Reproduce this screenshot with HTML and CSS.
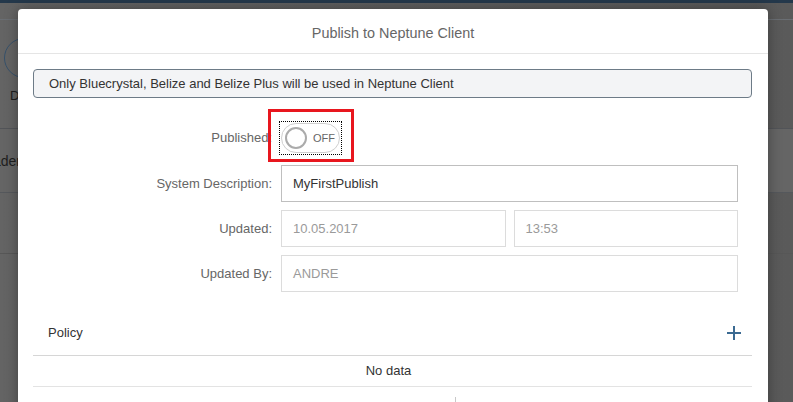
FILE: index.html
```html
<!DOCTYPE html>
<html lang="en">
<head>
    <meta charset="UTF-8">
    <meta name="viewport" content="width=device-width, initial-scale=1.0">
    <title>Publish to Neptune Client</title>
    <link rel="stylesheet" href="styles.css">
</head>
<body>

<!-- page behind the dialog, already dimmed -->
<div class="page">
    <div class="shell-bar"></div>
    <div class="page-row row-top"></div>
    <div class="page-row row-tile">
        <div class="avatar"></div>
        <div class="tile-label">Data</div>
    </div>
    <div class="page-row row-list"><span class="list-text">Header</span></div>
    <div class="page-row row-empty"></div>
    <div class="page-rest"></div>
</div>

<div class="dialog">
    <div class="dialog-header">Publish to Neptune Client</div>

    <div class="dialog-content">
        <div class="message-strip">Only Bluecrystal, Belize and Belize Plus will be used in Neptune Client</div>

        <div class="form">
            <label class="form-label">Published:</label>
            <div class="form-field">
                <div class="switch-focus">
                    <div class="switch">
                        <span class="switch-knob"></span>
                        <span class="switch-text">OFF</span>
                    </div>
                </div>
            </div>

            <label class="form-label">System Description:</label>
            <div class="form-field">
                <div class="input">MyFirstPublish</div>
            </div>

            <label class="form-label">Updated:</label>
            <div class="form-field field-pair">
                <div class="input disabled">10.05.2017</div>
                <div class="input disabled">13:53</div>
            </div>

            <label class="form-label">Updated By:</label>
            <div class="form-field">
                <div class="input disabled">ANDRE</div>
            </div>
        </div>

        <div class="toolbar">
            <span class="toolbar-title">Policy</span>
            <svg class="add-icon" width="14" height="14" viewBox="0 0 14 14">
                <path d="M7 0V14M0 7H14" stroke="#3b6a92" stroke-width="2"/>
            </svg>
        </div>
        <div class="table-row">No data</div>
        <div class="table-next"><span class="col-tick"></span></div>
    </div>

    <div class="highlight"></div>
</div>

</body>
</html>
```

FILE: styles.css
```css
body {
    margin: 0;
    padding: 0;
    font-family: "Liberation Sans", Arial, sans-serif;
    background-color: #5e5e5e;
    overflow: hidden;
}
.page {
    height: 402px;
    background: linear-gradient(to right, #646464, #5a5a5a);
}
.shell-bar {
    height: 3px;
    background-color: #24384b;
}
.page-row {
    border-bottom: 1px solid #6c6c6c;
}
.row-top {
    height: 16px;
    border-bottom-color: #6a6e73;
}
.row-tile {
    height: 90px;
    padding-left: 4px;
    border-bottom-color: #525458;
}
.avatar {
    width: 38px;
    height: 38px;
    margin-top: 18px;
    border: 1px solid #36516b;
    border-radius: 50%;
}
.tile-label {
    margin-top: 10px;
    margin-left: 6px;
    font-size: 13px;
    color: #1f1f1f;
}
.row-list {
    height: 63px;
    line-height: 63px;
    background-color: #656565;
    border-bottom-color: #55585c;
}
.list-text {
    margin-left: -25px;
    font-size: 14px;
    color: #1e1e1e;
}
.row-empty {
    height: 60px;
    border-bottom-color: #575757;
}

.dialog {
    position: absolute;
    left: 18px;
    top: 9px;
    width: 750px;
    height: 420px;
    background-color: #fff;
    border-radius: 4px;
    box-shadow: 0 0 14px 0 rgba(0,0,0,0.35);
}
.dialog-header {
    height: 40px;
    padding-top: 4px;
    line-height: 40px;
    text-align: center;
    font-size: 14.4px;
    color: #666;
    border-bottom: 1px solid #e5e5e5;
}
.dialog-content {
    padding: 0 16px 0 15px;
}
.message-strip {
    margin-top: 15px;
    height: 27px;
    line-height: 27px;
    padding-left: 15px;
    font-size: 13px;
    color: #333;
    background-color: #f3f4f6;
    border: 1px solid #6d7b87;
    border-radius: 4px;
}
.form {
    display: grid;
    grid-template-columns: 239px 1fr;
    grid-auto-rows: 37px;
    column-gap: 9px;
    row-gap: 8px;
    margin-top: 22px;
    padding-right: 14px;
    align-items: center;
}
.form > .form-label:first-child,
.form > .form-label:first-child + .form-field {
    height: 36px;
}
.form-label {
    text-align: right;
    font-size: 13px;
    color: #666;
}
.form > .form-label:first-child {
    line-height: 34px;
}
.form-field {
    height: 37px;
}
.field-pair {
    display: flex;
    gap: 8px;
}
.field-pair .input {
    flex: 1;
}
.input {
    box-sizing: border-box;
    height: 37px;
    line-height: 35px;
    padding-left: 11px;
    font-size: 13px;
    color: #333;
    border: 1px solid #bfbfbf;
}
.input.disabled {
    color: #9a9a9a;
    border-color: #dcdcdc;
}
.switch-focus {
    display: inline-block;
    margin-left: -2px;
    padding: 1px;
    border: 1px dotted #000;
}
.switch {
    box-sizing: border-box;
    display: flex;
    align-items: center;
    width: 59px;
    height: 30px;
    padding-left: 3px;
    border: 1px solid #cfcfcf;
    border-radius: 15px;
}
.switch-knob {
    box-sizing: border-box;
    width: 22px;
    height: 22px;
    border: 2px solid #ababab;
    border-radius: 50%;
}
.switch-text {
    margin-left: 6px;
    font-size: 11px;
    color: #666;
}
.toolbar {
    display: flex;
    align-items: center;
    justify-content: space-between;
    height: 45px;
    margin-top: 18px;
    padding: 0 11px 0 15px;
    border-bottom: 1px solid #d6d6d6;
}
.toolbar-title {
    font-size: 13px;
    color: #333;
}
.table-row {
    height: 30px;
    line-height: 29px;
    text-align: center;
    padding-right: 8px;
    font-size: 13px;
    color: #333;
    border-bottom: 1px solid #e3e3e3;
}
.table-next {
    height: 20px;
    padding-left: 422px;
}
.col-tick {
    display: block;
    width: 1px;
    height: 8px;
    margin-top: 10px;
    background-color: #c8c8c8;
}
.highlight {
    position: absolute;
    left: 250px;
    top: 100px;
    width: 86px;
    height: 53px;
    box-sizing: border-box;
    border: 3px solid #e8161e;
}
```
